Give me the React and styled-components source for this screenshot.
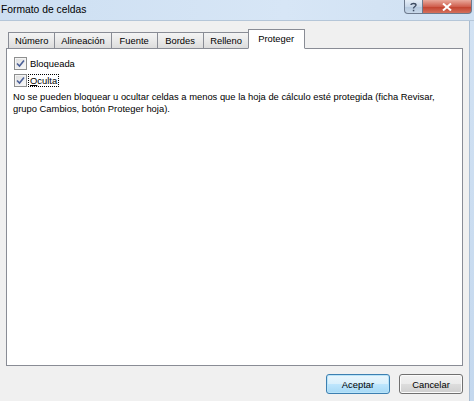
import React from 'react'
import styled, { createGlobalStyle } from 'styled-components'

const GlobalStyle = createGlobalStyle`
    html, body {
        margin: 0;
        padding: 0;
        background: #f0f0f0;
    }
    body {
        font-family: "Liberation Sans", Arial, sans-serif;
        font-size: 9.4px;
        color: #000;
    }
`

const Window = styled.div`
    width: 474px;
    height: 401px;
    display: flex;
    flex-direction: column;
    overflow: hidden;
`

const TitleBar = styled.div`
    height: 20px;
    flex-shrink: 0;
    display: flex;
    align-items: flex-start;
    justify-content: space-between;
    background: linear-gradient(to right, #cddff2 0%, #d7e6f6 60%, #cfe0f2 100%);
    border-bottom: 1px solid #b5c6d8;
`

const Title = styled.div`
    font-size: 10.3px;
    line-height: 19px;
    padding-left: 1px;
    color: #000;
`

const CaptionButtons = styled.div`
    display: flex;
    margin-right: 2px;
`

const CaptionButton = styled.div`
    height: 13px;
    display: flex;
    align-items: center;
    justify-content: center;
    border: 1px solid #6d7a8d;
    border-top: none;
    width: ${p => p.$w}px;
    background: ${p => p.$close
        ? 'linear-gradient(#e9a99c, #d0604f 50%, #c13f2c 51%, #d4705c)'
        : 'linear-gradient(#e6eef7, #c9d8e9 50%, #b4c8de 51%, #c9d9ea)'};
    border-radius: ${p => p.$close ? '0 0 4px 0' : '0 0 0 4px'};
    border-left: ${p => p.$close ? 'none' : '1px solid #6d7a8d'};
`

const Frame = styled.div`
    flex: 1;
    display: flex;
`

const Body = styled.div`
    flex: 1;
    display: flex;
    flex-direction: column;
    background: #f0f0f0;
    padding: 7px 6px 7px 6px;
`

const RightEdge = styled.div`
    width: 4px;
    background: linear-gradient(#d2e2f3, #c4d8ee);
    border-left: 1px solid #a9bcd1;
`

const TabRow = styled.div`
    display: flex;
    align-items: flex-end;
    padding-left: 2px;
    height: 20px;
    position: relative;
    z-index: 1;
`

const Tab = styled.div`
    height: ${p => p.$active ? 20 : 17}px;
    min-width: ${p => p.$active ? 57 : 46}px;
    padding: 0 ${p => p.$active ? 8 : 6}px;
    margin: 0 ${p => p.$active ? -2 : 0}px -1px;
    display: flex;
    align-items: center;
    justify-content: center;
    border: 1px solid #898c95;
    border-bottom: ${p => p.$active ? '1px solid #fff' : '1px solid #898c95'};
    border-left: ${p => p.$first || p.$active ? '1px solid #898c95' : 'none'};
    background: ${p => p.$active ? '#fff' : 'linear-gradient(#f4f4f4, #e9e9e9 50%, #dcdcdc)'};
    box-sizing: border-box;
    padding-bottom: ${p => p.$active ? 2 : 0}px;
    position: relative;
    z-index: ${p => p.$active ? 2 : 1};
`

const Panel = styled.div`
    flex: 1;
    background: #fff;
    border: 1px solid #898c95;
    padding: 8px 7px;
    display: flex;
    flex-direction: column;
    gap: 4px;
`

const CheckRow = styled.label`
    display: flex;
    align-items: center;
    gap: 1px;
    height: 13px;
`

const Box = styled.span`
    width: 11px;
    height: 11px;
    border: 1px solid #8e8f8f;
    background: linear-gradient(135deg, #dcdcdc, #fbfbfb);
    box-shadow: inset 0 0 0 1px #f4f4f4;
    display: flex;
    align-items: center;
    justify-content: center;
`

const Label = styled.span`
    padding: 0 1px;
    line-height: 11px;
    border: 1px dotted ${p => p.$focused ? '#000' : 'transparent'};
`

const Note = styled.p`
    margin: 0 0 0 -1px;
    line-height: 12px;
    white-space: nowrap;
`

const Footer = styled.div`
    display: flex;
    justify-content: flex-end;
    gap: 9px;
    padding-top: 8px;
`

const Button = styled.button`
    width: 64px;
    height: 20px;
    padding: 0;
    font-family: inherit;
    font-size: 9.4px;
    color: #000;
    border-radius: 3px;
    border: 1px solid ${p => p.$default ? '#3c7fb1' : '#707070'};
    background: ${p => p.$default
        ? 'linear-gradient(#eaf6fd, #d9f0fc 50%, #bee6fd 51%, #a7d9f5)'
        : 'linear-gradient(#f2f2f2, #ebebeb 50%, #dddddd 51%, #cfcfcf)'};
    box-shadow: inset 0 0 0 1px ${p => p.$default ? '#b9e4f9' : '#fbfbfb'};
`

const Check = () => (
    <svg width="9" height="9" viewBox="0 0 9 9">
        <path d="M1 4.5 L3.5 7 L8 1.5" fill="none" stroke="#4a5f97" strokeWidth="1.6" />
    </svg>
)

const HelpIcon = () => (
    <svg width="7" height="10" viewBox="0 0 7 10">
        <path d="M1 3 C1 1 6 1 6 3 C6 4.5 3.5 4.5 3.5 6.5" fill="none" stroke="#3d4b60" strokeWidth="1.4" />
        <rect x="2.8" y="7.8" width="1.5" height="1.5" fill="#3d4b60" />
    </svg>
)

const CloseIcon = () => (
    <svg width="10" height="8" viewBox="0 0 10 8">
        <path d="M1 0.5 L9 7.5 M9 0.5 L1 7.5" stroke="#fff" strokeWidth="2" />
    </svg>
)

const tabs = ['Número', 'Alineación', 'Fuente', 'Bordes', 'Relleno', 'Proteger']

const App = () => {
    return (
        <Window>
            <GlobalStyle />
            <TitleBar>
                <Title>Formato de celdas</Title>
                <CaptionButtons>
                    <CaptionButton $w={17}><HelpIcon /></CaptionButton>
                    <CaptionButton $w={48} $close><CloseIcon /></CaptionButton>
                </CaptionButtons>
            </TitleBar>
            <Frame>
                <Body>
                    <TabRow>
                        {tabs.map((t, i) => (
                            <Tab key={t} $first={i === 0} $active={t === 'Proteger'}>{t}</Tab>
                        ))}
                    </TabRow>
                    <Panel>
                        <CheckRow>
                            <Box><Check /></Box>
                            <Label>Bloqueada</Label>
                        </CheckRow>
                        <CheckRow>
                            <Box><Check /></Box>
                            <Label $focused><u>O</u>culta</Label>
                        </CheckRow>
                        <Note>
                            No se pueden bloquear u ocultar celdas a menos que la hoja de cálculo esté protegida (ficha Revisar,<br />
                            grupo Cambios, botón Proteger hoja).
                        </Note>
                    </Panel>
                    <Footer>
                        <Button $default>Aceptar</Button>
                        <Button>Cancelar</Button>
                    </Footer>
                </Body>
                <RightEdge />
            </Frame>
        </Window>
    )
}

export default App
